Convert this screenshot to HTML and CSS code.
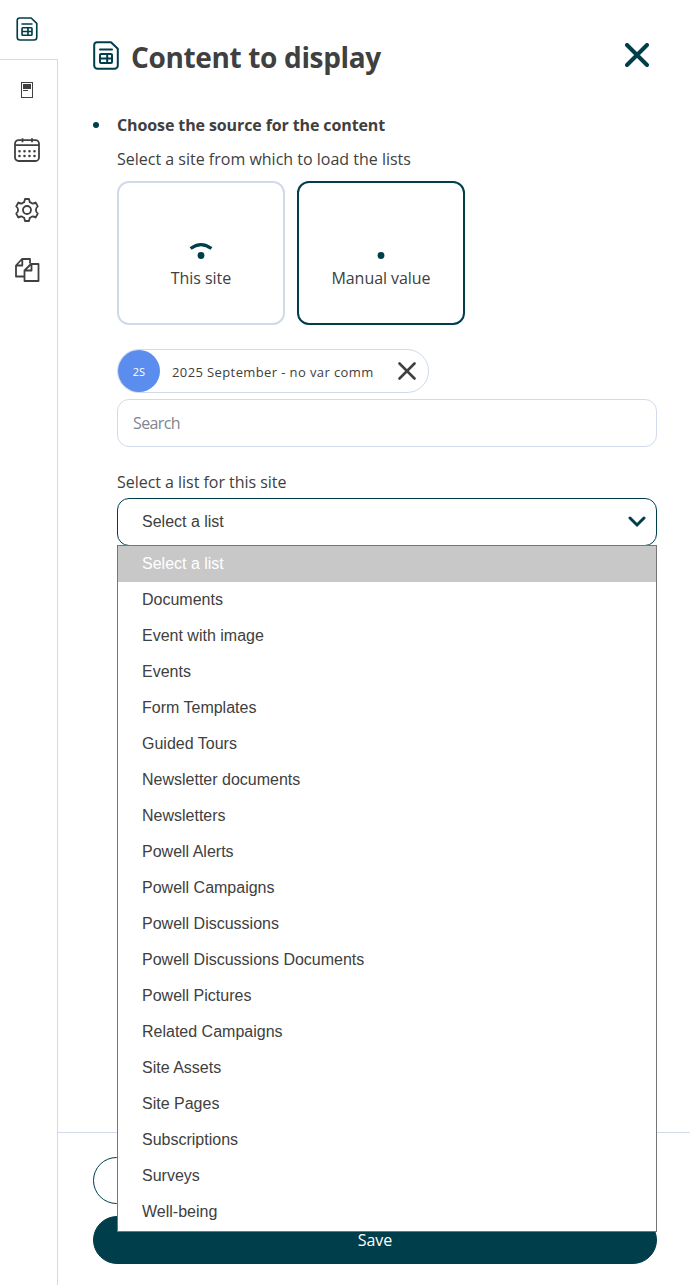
FILE: index.html
```
<!DOCTYPE html>
<html lang="en">
<head>
    <meta charset="UTF-8">
    <meta name="viewport" content="width=device-width, initial-scale=1.0">
    <title>Content to display</title>
    <link rel="stylesheet" href="styles.css">
</head>
<body>
<svg class="defs">
    <symbol id="icon-content" viewBox="0 0 26 29">
        <path d="M4 1.200h14l6.800 6.500V24.500a3.300 3.300 0 0 1-3.300 3.300H4.500A3.300 3.300 0 0 1 1.200 24.500V4A2.800 2.800 0 0 1 4 1.200z"/>
        <path d="M7 8.500h12M8 13h10a1 1 0 0 1 1 1v7a1 1 0 0 1-1 1H8a1 1 0 0 1-1-1v-7a1 1 0 0 1 1-1zM7 17.500h12M14.200 13v9"/>
    </symbol>
</svg>
<div class="app">
    <nav class="sidebar">
        <a class="tab tab-active"><svg class="tab-content-icon"><use href="#icon-content"/></svg></a>
        <a class="tab">
            <svg width="12" height="16" viewBox="0 0 12 16">
                <rect x="0.500" y="0.500" width="11" height="15" fill="none" stroke="#404040"/>
                <rect x="2" y="2" width="8" height="5" fill="#404040"/>
                <path d="M2 8.500h5" stroke="#404040"/>
            </svg>
        </a>
        <a class="tab">
            <svg class="line-icon" width="26" height="24" viewBox="0 0 26 24">
                <rect x="1" y="2.200" width="24" height="20.800" rx="3.500"/>
                <path d="M1 7.200h24M8.500 0.200v4M18 0.200v4"/>
                <path class="dots" d="M5.500 13.300h0M10.500 13.300h0M15.500 13.300h0M20.500 13.300h0M5.500 18h0M10.500 18h0M15.500 18h0M20.500 18h0"/>
            </svg>
        </a>
        <a class="tab">
            <svg class="line-icon" width="24" height="24" viewBox="0 0 24 24">
                <path d="M10 1h4l.8 3.200q1.200.4 2.100 1.200 1.900.4 3.700-.9l2.200 3.900q-1.900 1.500-1.900 3.600 0 2.100 1.900 3.600l-2.200 3.900q-1.800-1.300-3.700-.9-.9.8-2.100 1.200L14 23h-4l-.8-3.200q-1.200-.4-2.100-1.200-1.900-.4-3.700.9l-2.200-3.900q1.900-1.500 1.900-3.600 0-2.100-1.900-3.600l2.200-3.900q1.800 1.300 3.700.9.900-.8 2.100-1.200z"/>
                <circle cx="12" cy="12" r="4"/>
            </svg>
        </a>
        <a class="tab">
            <svg class="line-icon" width="26" height="24" viewBox="0 0 26 24">
                <path d="M10.500 18.500H2V7.500l6-6.500h8v4.500M8.300 1v6.500H2"/>
                <path d="M17 6h7.500v17h-14V12.500zM17.500 6v6.500h-7"/>
            </svg>
        </a>
    </nav>
    <main class="panel">
        <header class="panel-header">
            <svg class="title-icon"><use href="#icon-content"/></svg>
            <h1>Content to display</h1>
            <button class="close">
                <svg width="24" height="24" viewBox="0 0 24 24"><path d="M2 2l20 20M22 2L2 22"/></svg>
            </button>
        </header>
        <section class="step">
            <h2>Choose the source for the content</h2>
            <p class="hint">Select a site from which to load the lists</p>
            <div class="cards">
                <div class="card">
                    <svg width="24" height="18" viewBox="0 0 24 18">
                        <path d="M1.600 6.600Q12-1.500 22.400 6.600" fill="none" stroke="#003e4c" stroke-width="3.200"/>
                        <circle cx="12" cy="13.500" r="3.400" fill="#003e4c"/>
                    </svg>
                    <span>This site</span>
                </div>
                <div class="card selected">
                    <svg width="24" height="18" viewBox="0 0 24 18">
                        <circle cx="12" cy="13.500" r="3.400" fill="#003e4c"/>
                    </svg>
                    <span>Manual value</span>
                </div>
            </div>
            <div class="chip">
                <span class="avatar">2S</span>
                <span class="chip-name">2025 September - no var comm</span>
                <svg class="chip-remove" width="18" height="18" viewBox="0 0 18 18"><path d="M1.500 1.500l15 15M16.500 1.500l-15 15"/></svg>
            </div>
            <input class="search" type="text" placeholder="Search">
            <label class="list-label">Select a list for this site</label>
            <div class="select">
                <span>Select a list</span>
                <svg width="18" height="12" viewBox="0 0 18 12"><path d="M2 2l7 7 7-7"/></svg>
                <ul class="options">
                    <li class="current">Select a list</li>
                    <li>Documents</li>
                    <li>Event with image</li>
                    <li>Events</li>
                    <li>Form Templates</li>
                    <li>Guided Tours</li>
                    <li>Newsletter documents</li>
                    <li>Newsletters</li>
                    <li>Powell Alerts</li>
                    <li>Powell Campaigns</li>
                    <li>Powell Discussions</li>
                    <li>Powell Discussions Documents</li>
                    <li>Powell Pictures</li>
                    <li>Related Campaigns</li>
                    <li>Site Assets</li>
                    <li>Site Pages</li>
                    <li>Subscriptions</li>
                    <li>Surveys</li>
                    <li>Well-being</li>
                </ul>
            </div>
        </section>
        <footer class="panel-footer">
            <button class="btn btn-outline"></button>
            <button class="btn btn-primary">Save</button>
        </footer>
    </main>
</div>
</body>
</html>
```

FILE: styles.css
```
* {
    box-sizing: border-box;
}
body {
    margin: 0;
    background: #fff;
    color: #404040;
    font-family: "Open Sans", "Noto Sans", sans-serif;
    font-size: 16px;
}
h1, h2, p, ul {
    margin: 0;
    padding: 0;
}
button {
    font-family: inherit;
    cursor: pointer;
}
.defs {
    display: none;
}
.app {
    display: flex;
    height: 1285px;
    overflow: hidden;
}

/* left tabs */
.sidebar {
    width: 58px;
    flex: none;
    display: flex;
    flex-direction: column;
}
.tab {
    height: 60px;
    flex: none;
    display: flex;
    align-items: center;
    justify-content: center;
    padding-right: 3px;
    border-right: 1px solid #d1dae8;
}
.tab-active {
    border-right: none;
    border-bottom: 1px solid #d1dae8;
    padding: 0 4px 1px 0;
}
.sidebar::after {
    content: "";
    flex: 1;
    border-right: 1px solid #d1dae8;
}
.tab-content-icon, .title-icon {
    fill: none;
    stroke: #003e4c;
    stroke-width: 2;
    stroke-linecap: round;
    stroke-linejoin: round;
}
.tab-content-icon {
    width: 22px;
    height: 24px;
}
.line-icon {
    fill: none;
    stroke: #404040;
    stroke-width: 1.8;
    stroke-linejoin: round;
}
.line-icon .dots {
    stroke-width: 2.6;
    stroke-linecap: round;
}

/* panel */
.panel {
    flex: 1;
    display: flex;
    flex-direction: column;
}
.panel-header {
    display: flex;
    align-items: flex-start;
    padding: 41px 41px 0 35px;
    height: 111px;
}
.title-icon {
    width: 26px;
    height: 29px;
}
h1 {
    flex: 1;
    margin-left: 12px;
    font-size: 28px;
    line-height: 32px;
    letter-spacing: -0.35px;
    white-space: nowrap;
}
.close {
    display: flex;
    margin-top: 2px;
    padding: 0;
    border: none;
    background: none;
}
.close svg, .select svg {
    fill: none;
    stroke: #003e4c;
    stroke-width: 4;
    stroke-linecap: round;
}
.select svg {
    stroke-width: 3;
}
.step {
    flex: 1;
    padding: 0 33px 0 59px;
}
h2 {
    display: flex;
    align-items: center;
    margin-left: -24px;
    font-size: 16px;
    line-height: 28px;
    letter-spacing: -0.11px;
}
h2::before {
    content: "";
    width: 6px;
    height: 6px;
    margin-right: 18px;
    border-radius: 50%;
    background: #003e4c;
}
.hint, .list-label {
    display: block;
    font-size: 16px;
    line-height: 24px;
    white-space: nowrap;
}
.hint {
    margin: 8px 0 10px;
}
.cards {
    display: flex;
    gap: 12px;
}
.card {
    width: 168px;
    height: 144px;
    display: flex;
    flex-direction: column;
    align-items: center;
    padding-top: 59px;
    border: 2px solid #d1dae8;
    border-radius: 12px;
}
.card.selected {
    border-color: #003e4c;
}
.card span {
    margin-top: 6px;
    line-height: 24px;
    letter-spacing: -0.05px;
}
.chip {
    display: flex;
    align-items: center;
    width: 312px;
    height: 44px;
    margin-top: 24px;
    border: 1px solid #d1dae8;
    border-radius: 22px;
}
.avatar {
    width: 42px;
    height: 42px;
    border-radius: 50%;
    background: #5b8def;
    color: #fff;
    font-size: 11px;
    line-height: 43px;
    text-align: center;
}
.chip-name {
    flex: 1;
    margin-left: 12px;
    padding-top: 1px;
    font-size: 13px;
    line-height: 20px;
    letter-spacing: 0.39px;
    white-space: nowrap;
}
.chip-remove {
    margin-right: 12px;
    stroke: #404040;
    stroke-width: 2.6;
    stroke-linecap: round;
}
.search {
    display: block;
    width: 100%;
    height: 48px;
    margin: 6px 0 23px;
    padding: 0 15px;
    border: 1px solid #d1dae8;
    border-radius: 12px;
    font-family: inherit;
    font-size: 16px;
    letter-spacing: -0.6px;
}
.search::placeholder {
    color: #808590;
}
.list-label {
    margin-bottom: 4px;
    letter-spacing: -0.03px;
}
.select {
    position: relative;
    display: flex;
    justify-content: space-between;
    align-items: center;
    height: 48px;
    padding: 0 10px 0 24px;
    border: 1px solid #003e4c;
    border-radius: 12px;
    font-family: "Liberation Sans", Arial, sans-serif;
}
.options {
    position: absolute;
    top: 46px;
    left: -1px;
    right: -1px;
    z-index: 1;
    padding-bottom: 1px;
    border: 1px solid #767676;
    background: #fff;
    list-style: none;
}
.options li {
    height: 36px;
    padding-left: 24px;
    line-height: 35px;
}
.options .current {
    background: #c8c8c8;
    color: #fff;
}
.panel-footer {
    display: flex;
    flex-direction: column;
    gap: 12px;
    padding: 24px 33px 21px 35px;
    border-top: 1px solid #d1dae8;
}
.btn {
    height: 47px;
    border: 1px solid #003e4c;
    border-radius: 24px;
    background: #fff;
    font-size: 16px;
}
.btn-primary {
    height: 48px;
    background: #003e4c;
    color: #fff;
}
```
